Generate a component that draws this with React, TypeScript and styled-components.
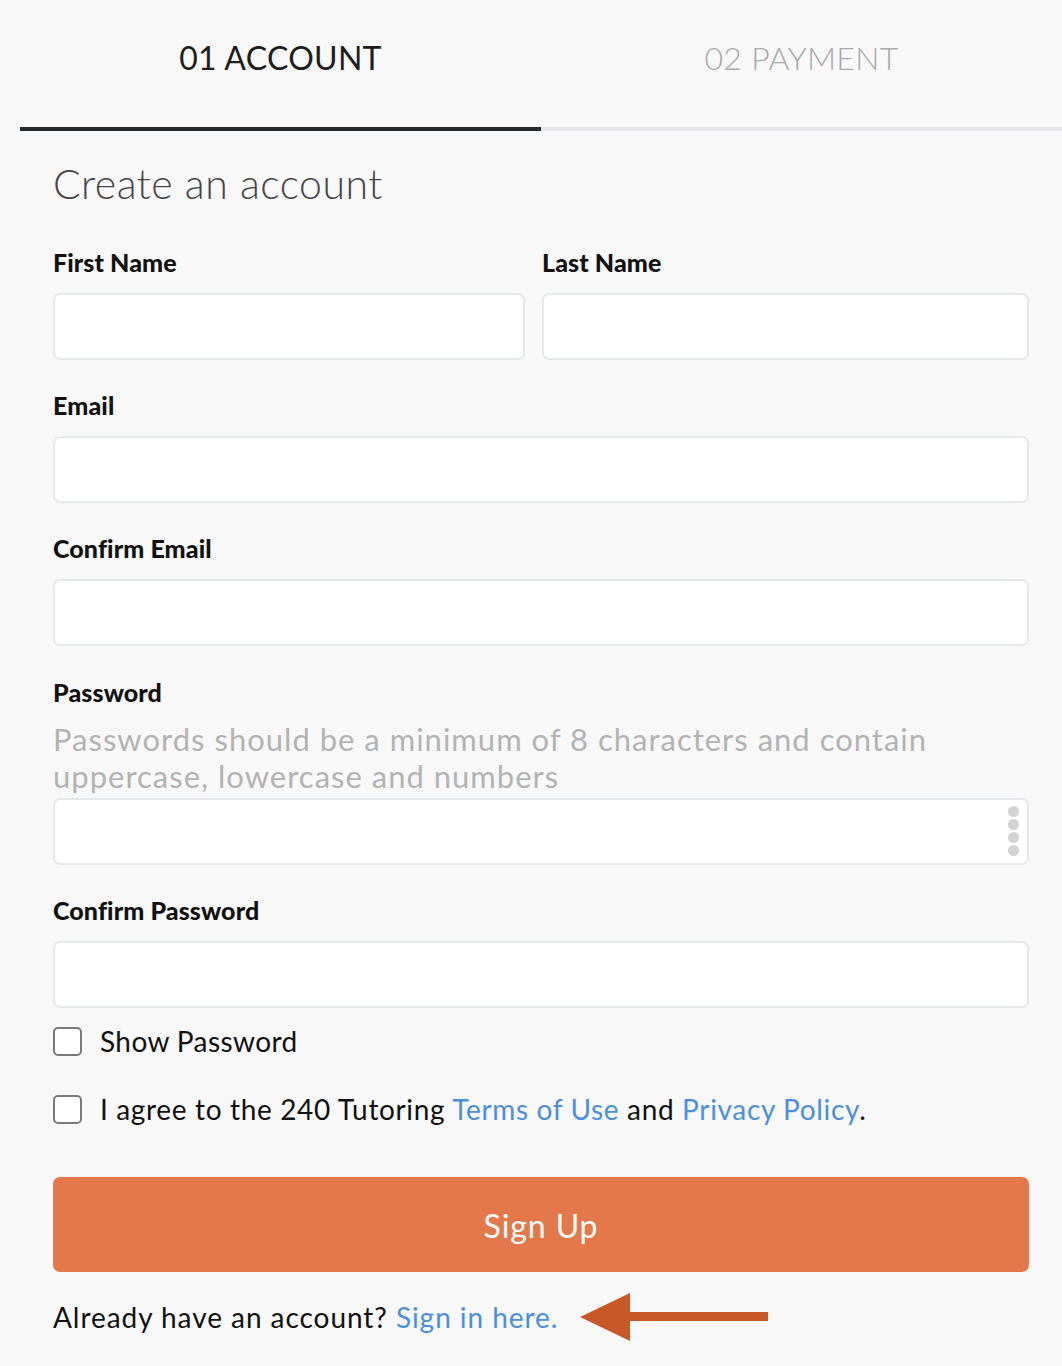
import React from "react";
import styled, { createGlobalStyle } from "styled-components";

const Global = createGlobalStyle`
  html, body { margin: 0; padding: 0; background: #f8f8f8; }
  body { font-family: Lato, "Open Sans", sans-serif; color: #111; }
  * { box-sizing: border-box; }
`;

const Page = styled.div`
  padding-left: 20px;
  width: 1062px;
  background: #f8f8f8;
`;

const Tabs = styled.div`
  display: grid;
  grid-template-columns: 1fr 1fr;
`;

const Tab = styled.div<{ $active?: boolean }>`
  height: 131px;
  display: flex;
  align-items: flex-start;
  justify-content: center;
  padding-top: 38px;
  font-size: 32px;
  line-height: 40px;
  font-weight: ${(p) => (p.$active ? 400 : 300)};
  letter-spacing: 0.3px;
  color: ${(p) => (p.$active ? "#1e1e1e" : "#a9a9a9")};
  border-bottom: ${(p) => (p.$active ? "4px solid #26292d" : "4px solid #e4e6e9")};
`;

const Form = styled.div`
  padding: 0 33px 0 33px;
  display: flex;
  flex-direction: column;
`;

const Title = styled.h1`
  margin: 29px 0 0 0;
  font-size: 41px;
  line-height: 48px;
  font-weight: 300;
  color: #464646;
  letter-spacing: 0.5px;
`;

const Row = styled.div`
  display: grid;
  grid-template-columns: 472px 1fr;
  gap: 17px;
  margin-top: 39px;
`;

const Field = styled.div<{ $first?: boolean; $extra?: number }>`
  display: flex;
  flex-direction: column;
  margin-top: ${(p) => (p.$first ? 0 : 30 + (p.$extra ?? 0))}px;
`;

const Label = styled.label`
  font-size: 25px;
  line-height: 30px;
  font-weight: 900;
  color: #111;
  margin-bottom: 16px;
  letter-spacing: 0.1px;
`;

const Help = styled.div`
  font-size: 31px;
  line-height: 37px;
  color: #b3b3b3;
  font-weight: 400;
  margin: -2px 0 3px;
  letter-spacing: 1px;
`;

const InputWrap = styled.div`
  position: relative;
`;

const Input = styled.input`
  display: block;
  width: 100%;
  height: 67px;
  background: #fff;
  border: 2px solid #e6e9ec;
  border-radius: 7px;
  outline: none;
  font-size: 24px;
  font-family: inherit;
  padding: 0 16px;
`;

const Dots = styled.div`
  position: absolute;
  right: 10px;
  top: 8px;
  display: flex;
  flex-direction: column;
  gap: 2px;
`;

const Dot = styled.span`
  width: 11px;
  height: 11px;
  border-radius: 50%;
  background: #d3d3d3;
`;

const CheckRow = styled.label<{ $gap: number; $spacing: number }>`
  display: flex;
  align-items: center;
  gap: 18px;
  height: 40px;
  margin-top: ${(p) => p.$gap}px;
  font-size: 28px;
  color: #111;
  letter-spacing: ${(p) => p.$spacing}px;
`;

const Box = styled.span`
  width: 29px;
  height: 29px;
  border: 2px solid #7a7a7a;
  border-radius: 5px;
  background: #fff;
  flex: none;
`;

const Link = styled.a`
  color: #4a8fe2;
  text-decoration: none;
`;

const Button = styled.button`
  margin-top: 48px;
  height: 95px;
  width: 100%;
  border: none;
  border-radius: 7px;
  background: #e4784a;
  color: #fff;
  font-family: inherit;
  font-size: 32px;
  letter-spacing: 0.9px;
  padding-top: 2px;
`;

const Footer = styled.div`
  display: flex;
  align-items: center;
  height: 48px;
  margin-top: 21px;
  font-size: 28px;
  color: #111;
  letter-spacing: 0.95px;
`;

const Arrow = styled.svg`
  margin-left: 22px;
  flex: none;
`;

export default function App() {
  return (
    <Page>
      <Global />
      <Tabs>
        <Tab $active>01 ACCOUNT</Tab>
        <Tab>02 PAYMENT</Tab>
      </Tabs>
      <Form>
        <Title>Create an account</Title>
        <Row>
          <Field $first>
            <Label>First Name</Label>
            <Input />
          </Field>
          <Field $first>
            <Label>Last Name</Label>
            <Input />
          </Field>
        </Row>
        <Field>
          <Label>Email</Label>
          <Input />
        </Field>
        <Field>
          <Label>Confirm Email</Label>
          <Input />
        </Field>
        <Field $extra={1}>
          <Label>Password</Label>
          <Help>
            Passwords should be a minimum of 8 characters and contain
            <br />
            uppercase, lowercase and numbers
          </Help>
          <InputWrap>
            <Input type="password" />
            <Dots>
              <Dot />
              <Dot />
              <Dot />
              <Dot />
            </Dots>
          </InputWrap>
        </Field>
        <Field>
          <Label>Confirm Password</Label>
          <Input type="password" />
        </Field>
        <CheckRow $gap={13} $spacing={0.4}>
          <Box />
          Show Password
        </CheckRow>
        <CheckRow $gap={28} $spacing={0.65}>
          <Box />
          <span>
            I agree to the 240 Tutoring <Link href="#">Terms of Use</Link> and{" "}
            <Link href="#">Privacy Policy</Link>.
          </span>
        </CheckRow>
        <Button>Sign Up</Button>
        <Footer>
          <span>
            Already have an account? <Link href="#">Sign in here.</Link>
          </span>
          <Arrow width="190" height="50" viewBox="0 0 190 50">
            <polygon points="0,25 50,1 50,49" fill="#c95828" />
            <rect x="48" y="20" width="140" height="9" fill="#c95828" />
          </Arrow>
        </Footer>
      </Form>
    </Page>
  );
}
